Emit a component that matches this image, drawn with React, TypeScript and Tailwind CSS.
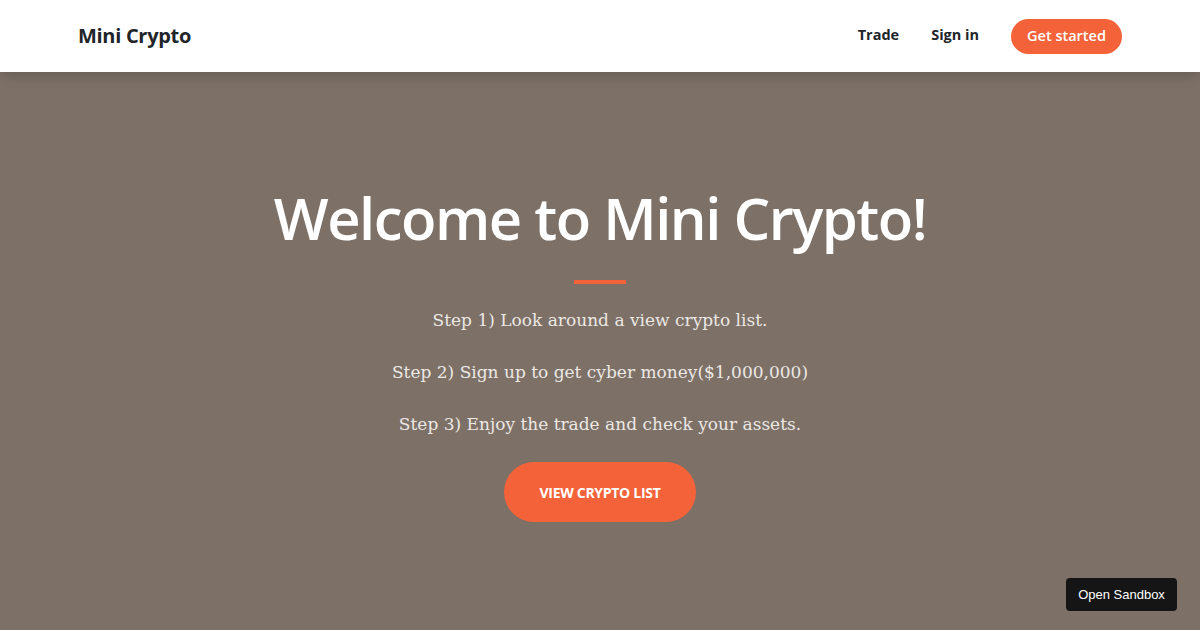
import React from "react";

const sans = { fontFamily: '"Open Sans", "Noto Sans", sans-serif' };
const serif = { fontFamily: '"DejaVu Serif", "Liberation Serif", serif' };

const steps = [
  "Step 1) Look around a view crypto list.",
  "Step 2) Sign up to get cyber money($1,000,000)",
  "Step 3) Enjoy the trade and check your assets.",
];

const App = () => {
  return (
    <div className="relative flex h-[630px] w-[1200px] flex-col overflow-hidden bg-[#7c7067]" style={sans}>
      <nav className="z-10 flex h-[72px] items-center justify-between bg-white pl-[78px] pr-[78px] shadow-[0_4px_12px_rgba(0,0,0,0.15)]">
        <span className="-mt-[1px] text-[20px] font-bold tracking-[-0.3px] text-[#212529]">Mini Crypto</span>
        <div className="flex items-center">
          <a className="-mt-[2px] text-[14.5px] font-bold text-[#212529]">Trade</a>
          <a className="-mt-[2px] ml-[32px] text-[14.5px] font-bold text-[#212529]">Sign in</a>
          <button className="ml-[32px] h-[35px] rounded-full bg-[#f4623a] px-[16px] text-[14.5px] font-semibold text-white">
            Get started
          </button>
        </div>
      </nav>

      <main className="flex flex-1 flex-col items-center pt-[110px]">
        <h1 className="-mt-[2px] text-[58px] font-semibold leading-[76px] tracking-[-1.5px] text-white">Welcome to Mini Crypto!</h1>
        <div className="mt-[24px] h-[4px] w-[52px] bg-[#f4623a]" />
        <div className="mt-[25px] flex flex-col items-center gap-[29px] text-[17px] leading-[23px] text-[#ece8e4]" style={serif}>
          {steps.map((s) => (
            <p key={s}>{s}</p>
          ))}
        </div>
        <button className="mt-[26px] h-[60px] w-[192px] rounded-full bg-[#f4623a] text-[14px] font-bold uppercase tracking-[-0.3px] text-white">
          View Crypto List
        </button>
      </main>

      <button
        className="absolute bottom-[19px] right-[23px] h-[33px] w-[111px] rounded-[4px] bg-[#151515] text-[13px] text-white"
        style={{ fontFamily: '"Liberation Sans", Arial, sans-serif' }}
      >
        Open Sandbox
      </button>
    </div>
  );
};

export default App;
